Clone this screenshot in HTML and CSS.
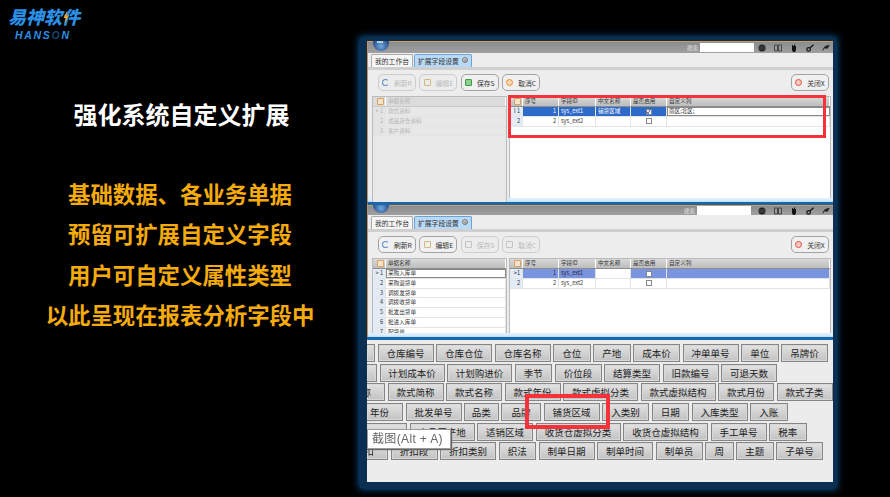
FILE: index.html
```html
<!DOCTYPE html>
<html lang="zh-CN">
<head>
<meta charset="utf-8">
<title>强化系统自定义扩展</title>
<link rel="stylesheet" href="styles.css">
</head>
<body>
<div class="slide">
  <section class="intro">
    <div class="brand">
      <div class="brand-cn">易神软件</div>
      <svg class="bolt" viewBox="0 0 6 14" width="6" height="14"><path d="M4.5 0 L0.5 8 H2.6 L1.2 14 L5.6 5.6 H3.4 Z" fill="#f2a51c"/></svg>
      <div class="brand-en">HANS<span class="brand-o">O</span>N</div>
    </div>
    <h1 class="title">强化系统自定义扩展</h1>
    <ul class="points">
      <li>基础数据、各业务单据</li>
      <li>预留可扩展自定义字段</li>
      <li>用户可自定义属性类型</li>
      <li>以此呈现在报表分析字段中</li>
    </ul>
  </section>

  <section class="frame">
    <div class="panel panel-one">
      <div class="topbar">
        <span class="app-logo">RP</span>
        <span class="search-label">搜索</span>
        <span class="search-input"></span>
        <span class="top-icons">
          <svg viewBox="0 0 8 8" width="8" height="8"><circle cx="4" cy="4" r="3.6" fill="#222"/><path d="M0 3h8M0 5h8" stroke="#777" stroke-width=".5"/></svg>
          <svg viewBox="0 0 8 8" width="8" height="8"><path d="M.5 1h3v6h-3zM4.5 1h3v6h-3z" fill="#999" stroke="#333" stroke-width=".8"/></svg>
          <svg viewBox="0 0 8 8" width="8" height="8"><path d="M2 3V1h1v1h1V.5h1V2h1v4L5 8H3L2 6z" fill="#111"/></svg>
          <svg viewBox="0 0 8 8" width="8" height="8"><circle cx="2.6" cy="5.4" r="1.8" fill="none" stroke="#111" stroke-width="1.2"/><path d="M4 4 7.5 .8" stroke="#111" stroke-width="1.2"/></svg>
          <svg viewBox="0 0 8 8" width="8" height="8"><path d="M.5 7C1 3 4 1 7.5 1 7 2 6.5 4 5 5L3 4z" fill="#222"/></svg>
        </span>
      </div>
      <div class="tabs">
        <span class="tab">我的工作台</span>
        <span class="tab tab-active">扩展字段设置<i class="tab-x">×</i></span>
      </div>
      <div class="toolbar">
        <span class="tool tool-off"><i class="ico ico-blue"></i>刷新R</span>
        <span class="tool tool-off"><i class="ico ico-tan"></i>编辑E</span>
        <span class="tool"><i class="ico ico-green"></i>保存S</span>
        <span class="tool"><i class="ico ico-orange"></i>取消C</span>
        <span class="tool tool-close"><i class="ico ico-red"></i>关闭X</span>
      </div>
      <div class="grids">
        <div class="grid grid-left grid-dim">
          <div class="grow ghead"><span class="gcell gcorner"><i class="corner"></i></span><span class="gcell">单据名称</span></div>
          <div class="grow"><span class="gcell gnum">&gt; 1</span><span class="gcell">款式资料</span></div>
          <div class="grow"><span class="gcell gnum">2</span><span class="gcell">成品店仓资料</span></div>
          <div class="grow"><span class="gcell gnum">3</span><span class="gcell">客户资料</span></div>
        </div>
        <div class="grid grid-right">
          <div class="grow ghead"><span class="gcell gcorner"><i class="corner"></i></span><span class="gcell">序号</span><span class="gcell">字段ID</span><span class="gcell">中文名称</span><span class="gcell">是否启用</span><span class="gcell">自定义列</span></div>
          <div class="grow grow-sel"><span class="gcell gnum">I 1</span><span class="gcell gright">1</span><span class="gcell">sys_ext1</span><span class="gcell">铺货区域</span><span class="gcell gcenter"><i class="check check-on">✓</i></span><span class="gcell gedit">南区;北区;</span></div>
          <div class="grow"><span class="gcell gnum">2</span><span class="gcell gright">2</span><span class="gcell">sys_ext2</span><span class="gcell"></span><span class="gcell gcenter"><i class="check"></i></span><span class="gcell"></span></div>
        </div>
      </div>
    </div>

    <div class="panel panel-two">
      <div class="topbar">
        <span class="app-logo">RP</span>
        <span class="search-label">搜索</span>
        <span class="search-input"></span>
        <span class="top-icons">
          <svg viewBox="0 0 8 8" width="8" height="8"><circle cx="4" cy="4" r="3.6" fill="#222"/><path d="M0 3h8M0 5h8" stroke="#777" stroke-width=".5"/></svg>
          <svg viewBox="0 0 8 8" width="8" height="8"><path d="M.5 1h3v6h-3zM4.5 1h3v6h-3z" fill="#999" stroke="#333" stroke-width=".8"/></svg>
          <svg viewBox="0 0 8 8" width="8" height="8"><path d="M2 3V1h1v1h1V.5h1V2h1v4L5 8H3L2 6z" fill="#111"/></svg>
          <svg viewBox="0 0 8 8" width="8" height="8"><circle cx="2.6" cy="5.4" r="1.8" fill="none" stroke="#111" stroke-width="1.2"/><path d="M4 4 7.5 .8" stroke="#111" stroke-width="1.2"/></svg>
          <svg viewBox="0 0 8 8" width="8" height="8"><path d="M.5 7C1 3 4 1 7.5 1 7 2 6.5 4 5 5L3 4z" fill="#222"/></svg>
        </span>
      </div>
      <div class="tabs">
        <span class="tab">我的工作台</span>
        <span class="tab tab-active">扩展字段设置<i class="tab-x">×</i></span>
      </div>
      <div class="toolbar">
        <span class="tool"><i class="ico ico-blue"></i>刷新R</span>
        <span class="tool"><i class="ico ico-tan"></i>编辑E</span>
        <span class="tool tool-off"><i class="ico ico-grey"></i>保存S</span>
        <span class="tool tool-off"><i class="ico ico-grey"></i>取消C</span>
        <span class="tool tool-close"><i class="ico ico-red"></i>关闭X</span>
      </div>
      <div class="grids">
        <div class="grid grid-left">
          <div class="grow ghead"><span class="gcell gcorner"><i class="corner"></i></span><span class="gcell">单据名称</span></div>
          <div class="grow"><span class="gcell gnum">&gt; 1</span><span class="gcell gedit">采购入库单</span></div>
          <div class="grow"><span class="gcell gnum">2</span><span class="gcell">采购退货单</span></div>
          <div class="grow"><span class="gcell gnum">3</span><span class="gcell">调拨发货单</span></div>
          <div class="grow"><span class="gcell gnum">4</span><span class="gcell">调拨收货单</span></div>
          <div class="grow"><span class="gcell gnum">5</span><span class="gcell">批发出货单</span></div>
          <div class="grow"><span class="gcell gnum">6</span><span class="gcell">批进入库单</span></div>
          <div class="grow"><span class="gcell gnum">7</span><span class="gcell">配货单</span></div>
        </div>
        <div class="grid grid-right">
          <div class="grow ghead"><span class="gcell gcorner"><i class="corner"></i></span><span class="gcell">序号</span><span class="gcell">字段ID</span><span class="gcell">中文名称</span><span class="gcell">是否启用</span><span class="gcell">自定义列</span></div>
          <div class="grow grow-cur"><span class="gcell gnum">&gt;1</span><span class="gcell gright">1</span><span class="gcell">sys_ext1</span><span class="gcell gwhite"></span><span class="gcell gcenter"><i class="check"></i></span><span class="gcell"></span></div>
          <div class="grow"><span class="gcell gnum">2</span><span class="gcell gright">2</span><span class="gcell">sys_ext2</span><span class="gcell"></span><span class="gcell gcenter"><i class="check"></i></span><span class="gcell"></span></div>
        </div>
      </div>
    </div>

    <div class="panel panel-three">
      <div class="field-row">
        <span class="fbtn cut c8"></span>
        <span class="fbtn w4">仓库编号</span><span class="fbtn w4">仓库仓位</span><span class="fbtn w4">仓库名称</span><span class="fbtn w2">仓位</span><span class="fbtn w2">产地</span><span class="fbtn w3">成本价</span><span class="fbtn w4">冲单单号</span><span class="fbtn w2">单位</span><span class="fbtn w3">吊牌价</span>
      </div>
      <div class="field-row">
        <span class="fbtn cut c10"></span>
        <span class="fbtn w5">计划成本价</span><span class="fbtn w5">计划购进价</span><span class="fbtn w2">季节</span><span class="fbtn w3">价位段</span><span class="fbtn w4">结算类型</span><span class="fbtn w4">旧款编号</span><span class="fbtn w4">可退天数</span>
      </div>
      <div class="field-row">
        <span class="fbtn cut c18">称</span>
        <span class="fbtn w4">款式简称</span><span class="fbtn w4">款式名称</span><span class="fbtn w4">款式年份</span><span class="fbtn w6">款式虚拟分类</span><span class="fbtn w6">款式虚拟结构</span><span class="fbtn w4">款式月份</span><span class="fbtn w4">款式子类</span>
      </div>
      <div class="field-row">
        <span class="fbtn cut c36">年份</span>
        <span class="fbtn w4">批发单号</span><span class="fbtn w2s">品类</span><span class="fbtn w2l">品牌</span><span class="fbtn w4">铺货区域</span><span class="fbtn w3">入类别</span><span class="fbtn w2">日期</span><span class="fbtn w4">入库类型</span><span class="fbtn w2">入账</span>
      </div>
      <div class="field-row">
        <span class="fbtn cut c40"></span>
        <span class="fbtn w5">商品原产地</span><span class="fbtn w4">适销区域</span><span class="fbtn w7">收货仓虚拟分类</span><span class="fbtn w7">收货仓虚拟结构</span><span class="fbtn w4">手工单号</span><span class="fbtn w2">税率</span>
      </div>
      <div class="field-row">
        <span class="fbtn cut c21">扣</span>
        <span class="fbtn w3">折扣段</span><span class="fbtn w4">折扣类别</span><span class="fbtn w2">织法</span><span class="fbtn w4">制单日期</span><span class="fbtn w4">制单时间</span><span class="fbtn w3">制单员</span><span class="fbtn w1">周</span><span class="fbtn w2">主题</span><span class="fbtn w3">子单号</span>
      </div>
    </div>

    <div class="tooltip">截图(Alt + A)</div>
    <div class="mark mark-top"></div>
    <div class="mark mark-bottom"></div>
  </section>
</div>
</body>
</html>
```

FILE: styles.css
```css
* { box-sizing: border-box; }
html, body { margin: 0; padding: 0; }
body {
  width: 890px;
  height: 497px;
  overflow: hidden;
  background: #000;
  font-family: "Noto Sans CJK SC", "Noto Sans", sans-serif;
}
.slide { display: flex; width: 890px; height: 497px; }

/* left column */
.intro { width: 360px; flex: none; display: flex; flex-direction: column; }
.brand { position: relative; padding: 5px 0 0 8px; height: 98px; }
.brand-cn {
  font-size: 18px; line-height: 23px; font-weight: 900; font-style: italic;
  color: #2b8fe6; letter-spacing: 0;
}
.bolt { position: absolute; left: 63px; top: 10px; }
.brand-en {
  margin: 1px 0 0 7px;
  font-family: "Liberation Sans", sans-serif;
  font-size: 10.5px; line-height: 12px; font-weight: 700; font-style: italic;
  letter-spacing: 1.7px; color: #2b8fe6;
}
.brand-o { color: #14456f; }
.title {
  margin: 0; padding-left: 3px; text-align: center;
  font-size: 24px; line-height: 32px; font-weight: 700; color: #fff;
}
.points {
  list-style: none; margin: 43px 0 0; padding: 0; text-align: center;
  font-size: 22.4px; line-height: 40.3px; font-weight: 700; color: #f6ab0c;
}

/* framed screenshot */
.frame {
  position: relative; flex: none;
  width: 476px; height: 450px; margin-top: 38px;
  padding: 3px 3px 6px 7px;
  background: #0a2f52;
  box-shadow: 0 0 7px 1px #0d5a99;
  filter: blur(.35px);
}
.panel { position: relative; overflow: hidden; display: flex; flex-direction: column; }
.panel-one {
  height: 161px;
  background: linear-gradient(to bottom, #ededed 0, #ededed 153px, #dcedfb 159px, #bcdcf6 161px);
  border-left: 1px solid #c9964f;
}
.panel-two {
  height: 135px;
  border-top: 3px solid #1767ad;
  background: linear-gradient(to bottom, #ededed 0, #ededed 124px, #dcedfb 130px, #bcdcf6 132px);
  border-left: 1px solid #c9964f;
}
.panel-three {
  height: 145px; padding-top: 4px;
  border-top: 3px solid #1767ad;
  background: #ececec;
  display: grid; grid-template-rows: repeat(6, 18px); row-gap: 1.7px; align-content: start;
}

/* top strip */
.topbar {
  position: relative; flex: none; height: 12px;
  display: flex; align-items: center; justify-content: flex-end;
  padding-right: 3px;
  background: linear-gradient(#8c8c8c, #a0a0a0);
  border-top: 1px solid #d89a4c;
}
.panel-two .topbar { height: 10px; }
.app-logo {
  position: absolute; left: 5px; top: -7px;
  width: 16px; height: 16px; border-radius: 50%;
  background: radial-gradient(circle at 50% 70%, #6fa7df, #1e3f78 70%);
  font-size: 6px; line-height: 12px; font-weight: 900; text-align: center; color: #fff;
}
.panel-two .app-logo { top: -9px; }
.search-label { font-size: 5.5px; color: #e4e4e4; margin-right: 2px; }
.search-input { width: 54px; height: 9px; background: #fff; margin-right: 4px; }
.panel-two .search-input { margin-right: 7px; }
.top-icons { display: flex; gap: 8px; align-items: center; }
.top-icons svg { display: block; }

/* tabs */
.tabs {
  flex: none; height: 17px; padding: 2px 0 0 3px;
  display: flex; gap: 1px; align-items: flex-end;
  border-bottom: 3px solid #cfcfcf;
}
.tab {
  width: 42px; height: 13px; font-size: 6.8px; line-height: 12px; color: #333; text-align: center;
  background: #f6f6f6; border: 1px solid #aaa; border-bottom: 0; border-radius: 2px 2px 0 0;
  white-space: nowrap;
}
.tab-active { width: 58px; background: #b9daf6; border-color: #6aa3d8; padding-left: 3px; display: flex; gap: 3px; }
.tab-x {
  width: 6px; height: 6px; margin-top: 2px; border-radius: 50%;
  background: #d5d5d5; border: 1px solid #777;
  font-style: normal; font-size: 5px; line-height: 4px; text-align: center;
}

/* tool bar */
.toolbar {
  flex: none; height: 26px; padding: 4px 4px 0 10px;
  display: flex; gap: 3.4px; align-items: flex-start;
}
.tool {
  width: 38px; height: 17px; border-radius: 5px;
  border: 1px solid #a4a4a4; background: #f0f0f0;
  display: flex; align-items: center; justify-content: center; gap: 5px;
  font-size: 6.8px; color: #333; white-space: nowrap;
}
.tool-off { color: #bbb; border-color: #cdcdcd; background: #ececec; }
.tool-close { margin-left: auto; }
.ico { width: 7px; height: 7px; flex: none; border-radius: 1px; border: 1px solid #999; }
.ico-blue { border-color: #5b8fd0; border-radius: 50%; border-right-color: transparent; }
.ico-tan { border-color: #d4b87f; }
.ico-green { background: #8fd08f; border-color: #3f9c44; }
.ico-orange { border-color: #ea8f35; border-radius: 50%; background: #fbd7ad; }
.ico-red { border-color: #e0503f; border-radius: 50%; background: #f9c9c1; }
.ico-grey { border-color: #c4c4c4; }

/* data grids */
.grids { flex: 1; min-height: 0; display: flex; gap: 2px; padding-left: 4px; }
.grid { border: 1px solid #bbb; border-bottom: 0; overflow: hidden; font-size: 5.6px; color: #333; }
.grid-left { width: 135px; flex: none; background: #ececec; }
.grid-right { flex: 1; background: #fff; margin-right: 2px; }
.grid-dim { color: #b4b4b4; background: #e8e8e8; }
.panel-one .grid-right { margin-bottom: 4px; }
.panel-two .grid-right { margin-bottom: 4px; }
.panel-two .grid-left { background: #fff; margin-bottom: 4px; }
.grow { display: grid; height: 9.7px; align-items: stretch; border-bottom: 1px solid #e4e4e4; }
.grid-left .grow { grid-template-columns: 13px 1fr; }
.grid-right .grow { grid-template-columns: 13px 36px 37px 35px 36px 1fr; }
.gcell {
  line-height: 8.7px; padding: 0 2px; white-space: nowrap; overflow: hidden;
  border-right: 1px solid #e4e4e4;
}
.ghead { height: 10.4px; background: linear-gradient(#d8d8d8, #bdbdbd); border-bottom: 1px solid #8d8d8d; }
.grid-dim .ghead { background: #dcdcdc; border-bottom-color: #c8c8c8; }
.ghead .gcell { border-right: 1px solid #fff; padding-left: 2px; line-height: 9.4px; }
.gcorner { display: flex; align-items: center; justify-content: center; padding: 0; }
.corner { width: 7px; height: 7px; border: 1px solid #d9a25f; border-radius: 1px; background: #f4e3cc; }
.gnum { text-align: right; background: #e2ebf6; }
.grid-dim .gnum { background: #e4e4e4; }
.gright { text-align: right; }
.gcenter { display: flex; align-items: center; justify-content: center; padding: 0; }
.grow-sel { background: #2e6ac8; color: #fff; }
.grow-sel .gnum { color: #333; }
.grow-cur { background: #7b94df; color: #223; }
.gwhite { background: #fff; }
.grow-cur .gnum { background: #e2ebf6; }
.gedit { background: #fff; color: #333; outline: 1px solid #888; outline-offset: -1px; }
.check {
  display: block; width: 6px; height: 6px; border: 1px solid #888; background: #fff;
  font-style: normal; font-size: 6px; line-height: 4px; text-align: center; color: #1c2f6b; font-weight: 700;
}

/* field buttons */
.field-row { display: flex; gap: 2.5px; height: 18px; }
.fbtn {
  flex: none; height: 18px; overflow: hidden;
  font-size: 9.5px; line-height: 16px; text-align: center; color: #222; white-space: nowrap;
  background: linear-gradient(#e2e2e2, #c2c2c2);
  border: 1px solid #858585;
  box-shadow: inset 0 0 0 1px #d8d8d8;
}
.w1 { width: 28.5px; }
.w2 { width: 37.5px; }
.w2s { width: 34.5px; }
.w2l { width: 40px; }
.w3 { width: 47px; }
.w4 { width: 56px; }
.w5 { width: 65px; }
.w6 { width: 75px; }
.w7 { width: 85px; }
.cut { text-align: right; padding-right: 13px; border-left: 0; direction: rtl; }
.c8 { width: 8px; padding-right: 0; }
.c10 { width: 10px; padding-right: 0; }
.c18 { width: 18px; }
.c21 { width: 21px; }
.c36 { width: 36px; }
.c40 { width: 40px; }

/* overlays */
.tooltip {
  position: absolute; left: 7px; top: 391px;
  width: 84px; height: 20px; padding-left: 4px;
  background: #fff; border: 1px solid #9a9a9a; box-shadow: 1px 1px 1px #666;
  font-family: "Liberation Sans", "Noto Sans CJK SC", sans-serif;
  font-size: 12px; letter-spacing: .35px; line-height: 18px; color: #666; white-space: nowrap;
}
.mark { position: absolute; border: 3px solid #f5313a; }
.mark-top { left: 148px; top: 57px; width: 318px; height: 43px; }
.mark-bottom { left: 165px; top: 356px; width: 85px; height: 35px; border-width: 4px; }
```
